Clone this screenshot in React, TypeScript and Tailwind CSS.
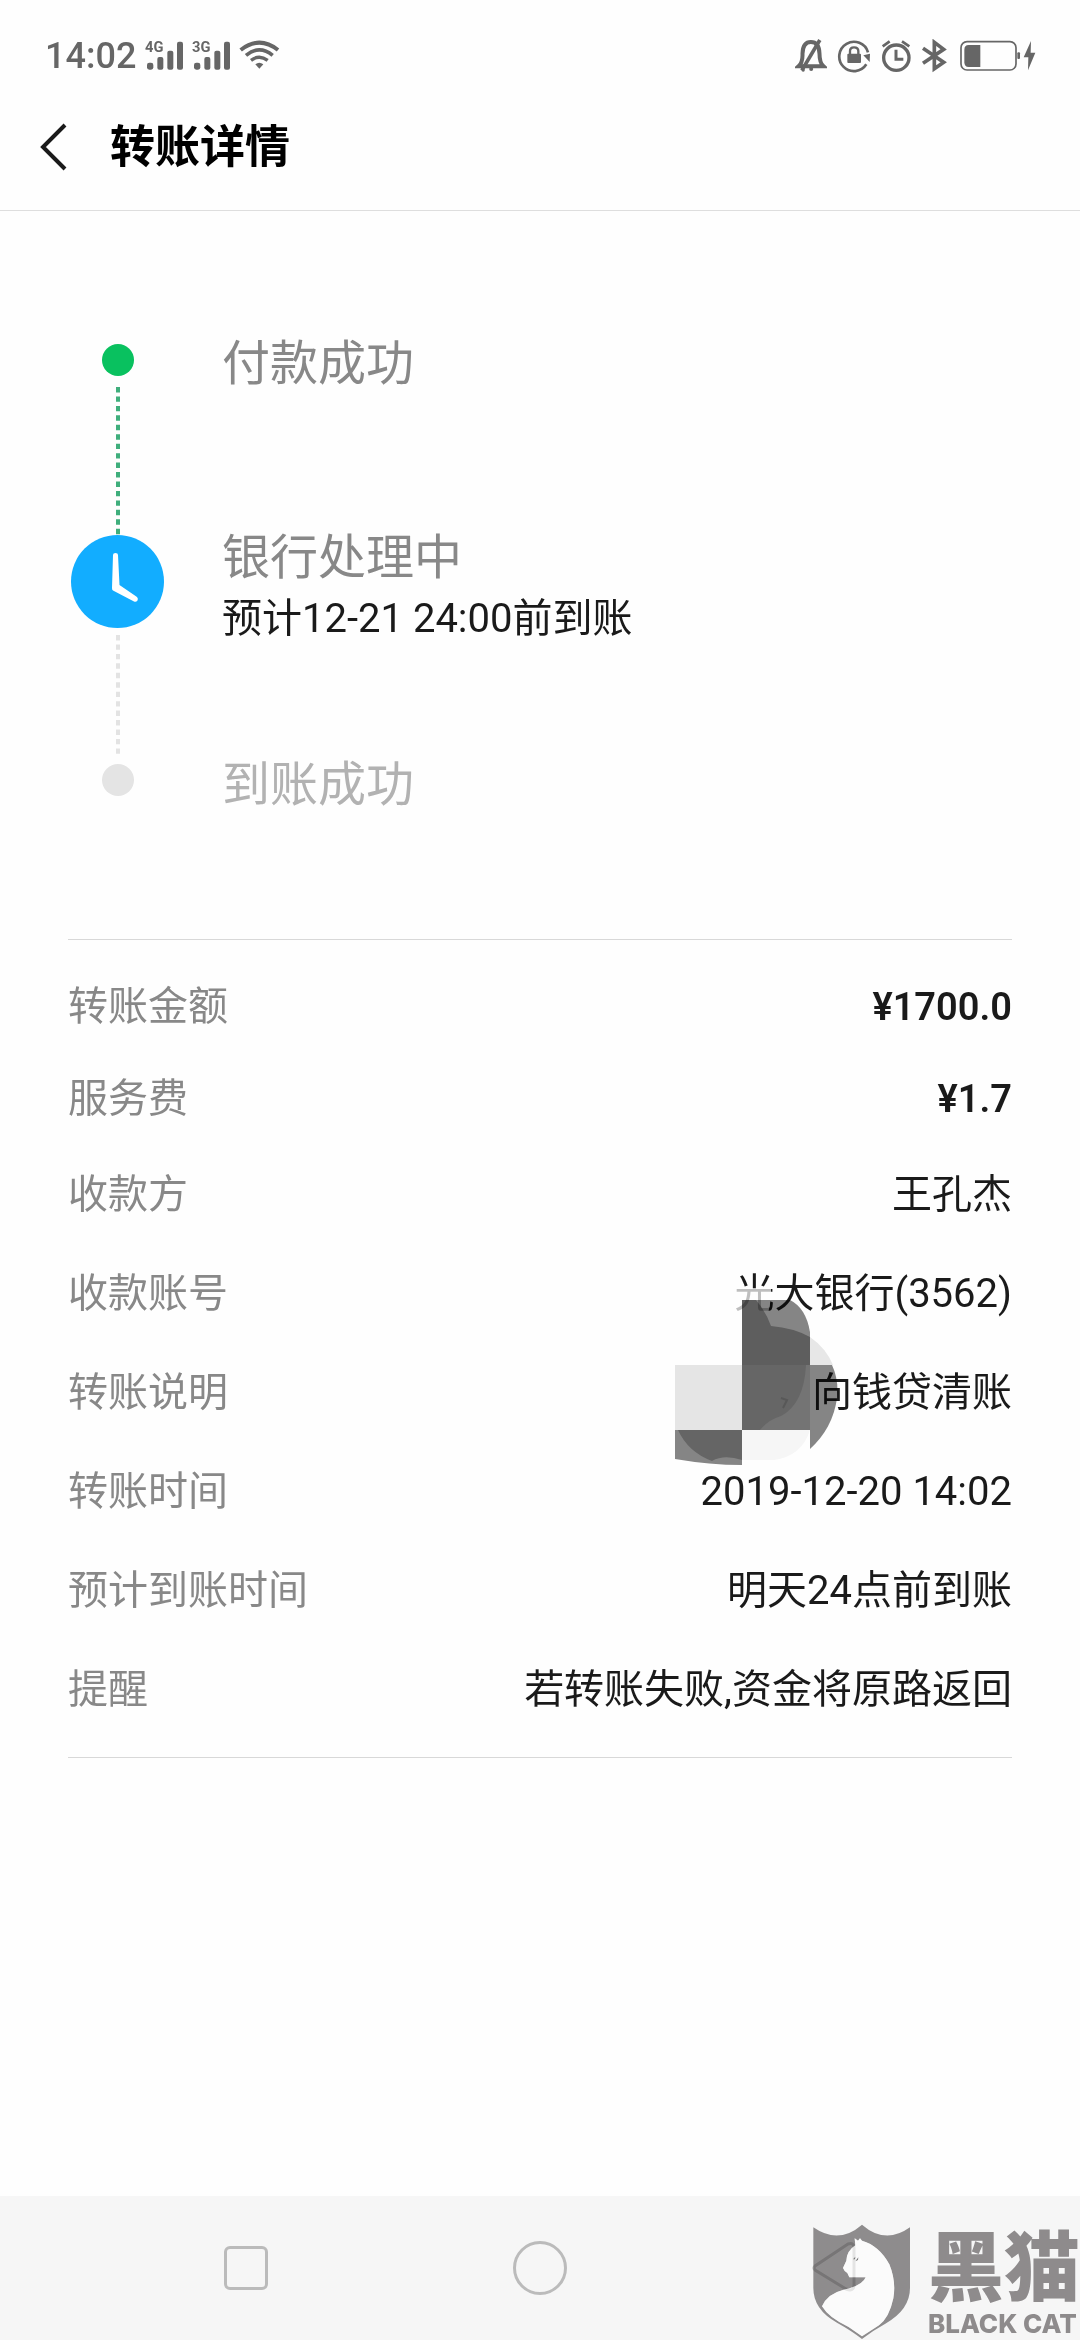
import type { ReactNode } from "react";

type Detail = {
  label: string;
  value: string;
  strong?: boolean;
  masked?: boolean;
};

const details: Detail[] = [
  { label: "转账金额", value: "¥1700.0", strong: true },
  { label: "服务费", value: "¥1.7", strong: true },
  { label: "收款方", value: "王孔杰" },
  { label: "收款账号", value: "光大银行(3562)" },
  { label: "转账说明", value: "向钱贷清账", masked: true },
  { label: "转账时间", value: "2019-12-20 14:02" },
  { label: "预计到账时间", value: "明天24点前到账" },
  { label: "提醒", value: "若转账失败,资金将原路返回" },
];

function SignalIcon({ network }: { network: string }) {
  return (
    <svg className="h-[35px] w-[38px]" viewBox="431 115 114 105" fill="currentColor" aria-hidden="true">
      <rect x="437" y="186" width="19" height="21" rx="7" />
      <rect x="468" y="169" width="18" height="38" rx="6" />
      <rect x="498" y="150" width="18" height="57" rx="6" />
      <rect x="527" y="123" width="18" height="84" rx="6" />
      <text x="431" y="154" fontSize="44" fontWeight="700">
        {network}
      </text>
    </svg>
  );
}

function WifiIcon() {
  return (
    <svg className="h-[35px] w-[41px]" viewBox="713 115 123 105" fill="none" stroke="currentColor" aria-hidden="true">
      <path d="M718 148Q774 104 830 148" strokeWidth="12" />
      <path d="M734 164Q774 131 814 164" strokeWidth="11" />
      <path d="M749 179Q774 160 799 179" strokeWidth="10" />
      <path d="M762 191Q774 182 786 191L774 204Z" fill="currentColor" stroke="none" />
    </svg>
  );
}

function StatusBar() {
  return (
    <div className="flex h-[84px] items-center justify-between pt-7 pr-11 pl-[45px] text-[#666]">
      <div className="flex items-center gap-[9px]">
        <span className="text-4xl font-medium">14:02</span>
        <SignalIcon network="4G" />
        <SignalIcon network="3G" />
        <WifiIcon />
      </div>
      <div className="flex items-center gap-2.5">
        {/* Muted bell */}
        <svg className="h-[35px] w-8" viewBox="105 114 95 105" fill="none" stroke="currentColor" aria-hidden="true">
          <path d="M115 196Q128 185 127 158Q128 123 152 123Q177 123 178 158Q178 185 190 196Z" strokeWidth="12" />
          <path d="M179 117L125 208" strokeWidth="11" />
          <circle cx="129" cy="207" r="5" fill="currentColor" stroke="none" />
          <circle cx="153" cy="204" r="6" fill="currentColor" stroke="none" />
        </svg>
        {/* Rotation lock */}
        <svg className="h-[35px] w-[34px]" viewBox="230 114 102 105" fill="none" stroke="currentColor" aria-hidden="true">
          <path d="M318 190A44 44 0 1 1 323 154" strokeWidth="8" />
          <path d="M309 163L329 158L328 183Z" fill="currentColor" stroke="none" />
          <rect x="261" y="158" width="41" height="28" rx="3" fill="currentColor" stroke="none" />
          <path d="M269 160V150Q269 139 281 139Q294 139 294 150V160" strokeWidth="7" />
        </svg>
        {/* Alarm */}
        <svg className="h-[35px] w-[30px]" viewBox="362 114 90 105" fill="none" stroke="currentColor" aria-hidden="true">
          <circle cx="408" cy="170" r="38" strokeWidth="10" />
          <path d="M407 146V175H429" strokeWidth="9" />
          <path d="M367 136L388 121M425 121L447 136" strokeWidth="8" />
        </svg>
        {/* Bluetooth */}
        <svg className="h-[35px] w-[27px]" viewBox="482 114 81 105" fill="none" stroke="currentColor" aria-hidden="true">
          <path d="M488 142L550 184L522 203V124L550 145L488 187" strokeWidth="11" />
        </svg>
        {/* Battery */}
        <svg className="h-[35px] w-[78px]" viewBox="593 114 234 105" fill="currentColor" aria-hidden="true">
          <rect x="602" y="122" width="165" height="85" rx="18" fill="none" stroke="currentColor" strokeWidth="5" />
          <path d="M660 132H625Q612 132 612 146V184Q612 198 625 198H660Z" />
          <rect x="771" y="154" width="8" height="20" rx="3" />
          <path d="M812 120L790 169H804L803 208L825 155H811Z" />
        </svg>
      </div>
    </div>
  );
}

function Header() {
  return (
    <header className="flex h-[127px] items-center border-b border-[#dedede] pl-[38px]">
      <button type="button" aria-label="返回" className="mr-[42px] text-[#1a1a1a]">
        <svg className="h-12 w-[30px]" viewBox="0 0 30 48" fill="none" stroke="currentColor" strokeWidth="4">
          <path d="M27 2L5 24L27 46" />
        </svg>
      </button>
      <h1 className="pt-0.5 text-[45px] leading-[60px] font-bold text-black">转账详情</h1>
    </header>
  );
}

function Rail() {
  return (
    <div className="flex w-[93px] flex-col items-center pt-2" aria-hidden="true">
      <span className="size-8 rounded-full bg-[#09c15f]" />
      <svg className="mt-[11px] h-[148px] w-1" viewBox="0 0 4 148">
        <path d="M2 0V148" stroke="#3fae7c" strokeWidth="4" strokeDasharray="5.4 4.05" />
      </svg>
      <svg className="size-[93px]" viewBox="0 0 93 93">
        <circle cx="46.5" cy="46.5" r="46.5" fill="#12adff" />
        <path
          d="M42 20Q42 18 44.500 18Q47 18 47 20L48.500 50L66 62Q67.500 63.500 66.500 65.500Q65 67.500 63 66.500L42 55.500Q41 55 41 53Z"
          fill="#fff"
        />
      </svg>
      <svg className="mt-[7px] h-[119px] w-1" viewBox="0 0 4 119">
        <path d="M2 0V119" stroke="#e3e3e3" strokeWidth="4" strokeDasharray="5.4 4.05" />
      </svg>
      <span className="mt-2.5 size-8 rounded-full bg-[#e4e4e4]" />
    </div>
  );
}

function Progress() {
  return (
    <section className="flex gap-[58px] px-[71px]">
      <Rail />
      <ol className="flex flex-col pt-0.5 text-5xl leading-[52px] text-[#888]">
        <li className="mb-[142px]">付款成功</li>
        <li className="mb-[105px]">
          银行处理中
          <p className="text-[40px] leading-[70px] text-[#1a1a1a]">预计12-21 24:00前到账</p>
        </li>
        <li className="text-[#b2b2b2]">到账成功</li>
      </ol>
    </section>
  );
}

// Mosaic brush over the hidden part of a value
function Mosaic() {
  return (
    <>
      <svg className="absolute right-[170px] -bottom-6 h-[180px] w-[170px]" viewBox="0 0 170 180" aria-hidden="true">
        <path d="M60 2H99V12L96 28H60Z" fill="#fefefe" opacity="0.72" />
      </svg>
      <svg
        className="absolute right-[170px] -bottom-6 h-[180px] w-[170px] mix-blend-multiply"
        viewBox="0 0 170 180"
        aria-hidden="true"
      >
        <rect x="3" y="79" width="67" height="65" fill="#e6e6e6" />
        <path d="M70 14H118Q134 22 138 46V79H70Z" fill="#868686" />
        <path d="M70 14H84Q94 26 99 40Q122 42 138 51V79H70Z" fill="#5e5e5e" />
        <path d="M138 51Q154 62 161 79H138Z" fill="#e8e8e8" />
        <rect x="70" y="79" width="68" height="65" fill="#747474" />
        <path d="M70 79H134Q132 118 109 130Q96 134 88 144H70Z" fill="#666" />
        <path d="M109 112L115 114L111 122" fill="none" stroke="#585858" strokeWidth="2" />
        <path d="M138 79H160Q167 94 165 112Q161 142 138 163Z" fill="#868686" />
        <path d="M70 144H138Q130 170 102 174H70Z" fill="#f7f7f7" />
        <path d="M3 144H70V179Q38 179 3 173Z" fill="#868686" />
        <path d="M6 144H70V174Q52 168 40 175Q16 166 6 144Z" fill="#656565" />
      </svg>
    </>
  );
}

function DetailRow({ label, strong, masked, children }: Omit<Detail, "value"> & { children: ReactNode }) {
  return (
    <div
      className={`flex items-center justify-between text-[40px] leading-[60px] ${strong ? "h-[92px]" : "h-[99px]"} ${
        masked ? "relative" : ""
      }`}
    >
      <dt className="text-[#888]">{label}</dt>
      <dd className={strong ? "text-[38px] font-semibold text-[#1a1a1a]" : "text-[#1a1a1a]"}>{children}</dd>
      {masked && <Mosaic />}
    </div>
  );
}

function Watermark() {
  return (
    <div className="pointer-events-none absolute right-0 bottom-0 flex items-end gap-4 text-[#8e8b8c]">
      <svg className="h-[117px] w-[100px]" viewBox="90 100 300 351" aria-hidden="true">
        <path
          fillRule="evenodd"
          fill="#494647"
          opacity="0.6"
          d="M94 113Q170 166 240 105Q310 166 384 113V295Q384 360 310 402Q270 424 240 448Q210 424 165 399Q94 360 94 295ZM218 146L228 153L234 146L240 153Q292 168 322 224Q343 275 334 326Q322 384 291 407L240 440L200 412Q140 384 120 350Q136 312 185 300Q242 288 251 263H202L196 250Q186 244 183 235L193 213Q194 184 220 167Z"
        />
        <path
          fill="#fff"
          opacity="0.6"
          d="M218 146L228 153L234 146L240 153Q292 168 322 224Q343 275 334 326Q322 384 291 407L240 440L200 412Q140 384 120 350Q136 312 185 300Q242 288 251 263H202L196 250Q186 244 183 235L193 213Q194 184 220 167Z"
        />
        <path d="M213 209L220 201L219 209ZM220 215L229 203L228 211Z" fill="#777" />
      </svg>
      <div className="flex flex-col">
        <span className="text-[76px] leading-[78px] font-black">黑猫</span>
        <span className="font-[Inter,sans-serif] text-[26px] leading-8 font-extrabold">BLACK CAT</span>
      </div>
    </div>
  );
}

function NavBar() {
  return (
    <footer className="relative overflow-hidden bg-[#f6f6f6]">
      <nav className="grid h-36 grid-cols-3 px-[99px] text-[#bbb]">
        <button type="button" aria-label="最近任务" className="flex items-center justify-center">
          <span className="size-11 rounded-md border-3 border-current" />
        </button>
        <button type="button" aria-label="主屏幕" className="flex items-center justify-center">
          <span className="size-[54px] rounded-full border-3 border-current" />
        </button>
        <button type="button" aria-label="返回上一页" className="flex items-center justify-center">
          <svg className="h-[54px] w-11" viewBox="0 0 44 54" fill="none" stroke="currentColor" strokeWidth="3">
            <path d="M36 3L3 25Q1 27 3 29L34 48Q42 51 42 44V7Q42 1 36 3Z" />
          </svg>
        </button>
      </nav>
      <Watermark />
    </footer>
  );
}

export default function App() {
  return (
    <div
      lang="zh-CN"
      className="flex min-h-screen flex-col bg-[#fefefe] font-[Roboto,'Noto_Sans_CJK_SC',sans-serif]"
    >
      <StatusBar />
      <Header />
      <main className="flex-1 pt-[125px]">
        <Progress />
        <dl className="mx-[68px] mt-[128px] border-y border-[#d8d8d8] pt-[21px] pb-[18px]">
          {details.map((item) => (
            <DetailRow key={item.label} label={item.label} strong={item.strong} masked={item.masked}>
              {item.value}
            </DetailRow>
          ))}
        </dl>
      </main>
      <NavBar />
    </div>
  );
}
